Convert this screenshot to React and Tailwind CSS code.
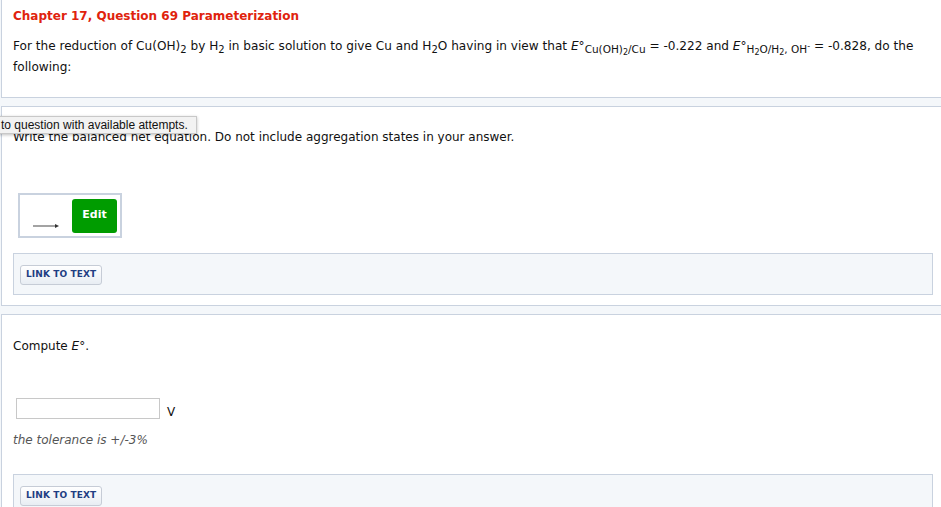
import React from "react";

function LinkToText() {
  return (
    <div className="h-[42px] bg-[#f4f7fa] border border-[#c9d2df] px-[6px] pt-[6px]">
      <button className="h-[20px] px-[5px] rounded-[3px] border border-[#c6ccd6] bg-gradient-to-b from-[#ffffff] to-[#e8edf3] text-[#1f3e83] text-[9px] font-bold tracking-[0.1px] leading-none">
        LINK TO TEXT
      </button>
    </div>
  );
}

export default function App() {
  return (
    <div className="w-full h-[507px] overflow-hidden bg-[#f4f7fa] text-[#111] font-['DejaVu_Sans',Verdana,sans-serif]">
      <div className="w-[943px] ml-px">
        {/* Intro panel */}
        <div className="h-[98px] bg-white border-l border-b border-[#c9d2df] px-[11px] pt-[7px]">
          <h1 className="text-[#e0230d] font-bold text-[12px] leading-[18px]">
            Chapter 17, Question 69 Parameterization
          </h1>
          <p className="mt-[11px] text-[12.1px] leading-[21px]">
            For the reduction of Cu(OH)<sub className="text-[10px]">2</sub> by H
            <sub className="text-[10px]">2</sub> in basic solution to give Cu and H
            <sub className="text-[10px]">2</sub>O having in view that <i>E</i>°
            <sub className="text-[10.5px]">
              Cu(OH)<sub className="text-[8px]">2</sub>/Cu
            </sub>{" "}
            = -0.222 and <i>E</i>°
            <sub className="text-[10.5px]">
              H<sub className="text-[8px]">2</sub>O/H<sub className="text-[8px]">2</sub>, OH
              <sup className="text-[8px]">-</sup>
            </sub>{" "}
            = -0.828, do the following:
          </p>
        </div>

        {/* Part 1 */}
        <div className="relative mt-[8px] h-[200px] bg-white border-l border-y border-[#c9d2df] px-[11px]">
          <div className="absolute left-[-10px] top-[9px] h-[18px] pl-[8px] pr-[8px] bg-[#f2f2f2] border border-[#c8c8c8] shadow-[0_1px_3px_rgba(0,0,0,0.25)] text-[12px] leading-[16px] text-[#111] font-['Liberation_Sans',Arial,sans-serif]">
            to question with available attempts.
          </div>
          <p className="pt-[22px] text-[12px] leading-[16px]">
            Write the balanced net equation. Do not include aggregation states in your answer.
          </p>
          <div className="mt-[48px] ml-[5px] w-[104px] h-[45px] border-2 border-[#c9d2df] flex items-center pl-[13px] pr-[3px]">
            <svg width="26" height="6" viewBox="0 0 26 6" className="mt-[20px]">
              <line x1="0" y1="3" x2="23" y2="3" stroke="#666" strokeWidth="1.2" />
              <path d="M22 1 L26 3 L22 5 Z" fill="#333" />
            </svg>
            <button className="ml-auto w-[45px] h-[34px] rounded-[3px] bg-[#009c00] text-white text-[11px] font-bold">
              Edit
            </button>
          </div>
          <div className="mt-[15px]">
            <LinkToText />
          </div>
        </div>

        {/* Part 2 */}
        <div className="mt-[8px] h-[200px] bg-white border-l border-t border-[#c9d2df] px-[11px]">
          <p className="pt-[23px] text-[12px] leading-[16px]">
            Compute <i>E</i>°.
          </p>
          <div className="mt-[44px] ml-[3px] flex items-end">
            <input className="w-[144px] h-[21px] border border-[#c8c8c8] bg-white outline-none" />
            <span className="ml-[7px] text-[12px] leading-[16px] mb-[-1px]">V</span>
          </div>
          <p className="mt-[13px] text-[12px] leading-[16px] italic text-[#555]">
            the tolerance is +/-3%
          </p>
          <div className="mt-[26px]">
            <LinkToText />
          </div>
        </div>
      </div>
    </div>
  );
}
